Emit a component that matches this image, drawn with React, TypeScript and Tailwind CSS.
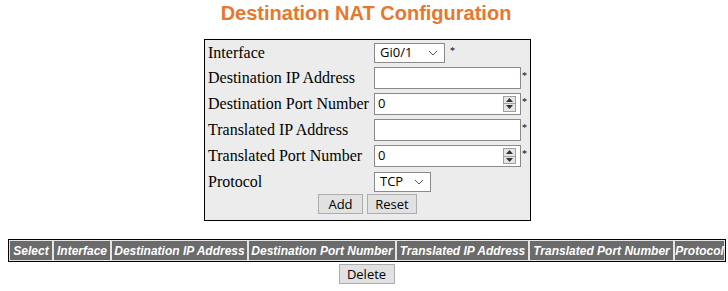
const COLUMNS = [
  { label: "Select", w: "w-[42px]" },
  { label: "Interface", w: "w-[56px]" },
  { label: "Destination IP Address", w: "w-[135px]" },
  { label: "Destination Port Number", w: "w-[146px]" },
  { label: "Translated IP Address", w: "w-[131px]" },
  { label: "Translated Port Number", w: "w-[143px]" },
  { label: "Protocol", w: "flex-1" },
];

const ui = "font-['Open_Sans','Noto_Sans',sans-serif]";

function Spinner() {
  return (
    <div className="flex flex-col w-[13px] h-[16px] border border-[#a0a0a0] bg-[#e6e6e6]">
      <div className="flex-1 flex items-center justify-center border-b border-[#a0a0a0]">
        <svg width="7" height="4" viewBox="0 0 7 4">
          <path d="M0 4 L3.5 0 L7 4 Z" fill="#333" />
        </svg>
      </div>
      <div className="flex-1 flex items-center justify-center">
        <svg width="7" height="4" viewBox="0 0 7 4">
          <path d="M0 0 L3.5 4 L7 0 Z" fill="#333" />
        </svg>
      </div>
    </div>
  );
}

function TextBox({ value, spin }: { value?: string; spin?: boolean }) {
  return (
    <div className="flex items-start">
      <div className="w-[147px] h-[22px] bg-white border border-[#8a8a8a] flex items-center pl-[3px] pr-[4px]">
        <span className={`flex-1 text-[13px] text-black ${ui}`}>{value}</span>
        {spin && <Spinner />}
      </div>
      <span className="text-[10px] leading-none ml-[1px] mt-[4px]">*</span>
    </div>
  );
}

function Select({ value, w, star }: { value: string; w: string; star?: boolean }) {
  return (
    <div className="flex items-start">
      <div className={`${w} h-[20px] bg-white border border-[#8a8a8a] flex items-center pl-[5px] pr-[6px]`}>
        <span className={`flex-1 text-[13px] text-black ${ui}`}>{value}</span>
        <svg width="10" height="6" viewBox="0 0 10 6">
          <path d="M1 1 L5 5 L9 1" stroke="#555" strokeWidth="1" fill="none" />
        </svg>
      </div>
      {star && <span className="text-[10px] leading-none ml-[5px] mt-[3px]">*</span>}
    </div>
  );
}

function Row({ label, children, h }: { label: string; children: React.ReactNode; h: string }) {
  return (
    <div className={`flex items-center ${h}`}>
      <div className="w-[166px] text-[16px] text-black whitespace-nowrap">{label}</div>
      {children}
    </div>
  );
}

export default function App() {
  return (
    <div className="w-[728px] h-[291px] bg-white font-['Liberation_Serif',serif] overflow-hidden">
      <h1 className="text-center text-[20px] font-bold text-[#e8772e] font-['Liberation_Sans',Arial,sans-serif] leading-[24px] pt-[1px] pl-[4px]">
        Destination NAT Configuration
      </h1>

      {/* form */}
      <div className="mt-[14px] ml-[204px] w-[327px] border border-black bg-[#ececec] pl-[3px] pt-[1px] pb-[6px]">
        <Row label="Interface" h="h-[24px]">
          <Select value="Gi0/1" w="w-[71px]" star />
        </Row>
        <Row label="Destination IP Address" h="h-[25px]">
          <TextBox />
        </Row>
        <Row label="Destination Port Number" h="h-[27px]">
          <TextBox value="0" spin />
        </Row>
        <Row label="Translated IP Address" h="h-[26px]">
          <TextBox />
        </Row>
        <Row label="Translated Port Number" h="h-[26px]">
          <TextBox value="0" spin />
        </Row>
        <Row label="Protocol" h="h-[25px]">
          <Select value="TCP" w="w-[57px]" />
        </Row>
        <div className={`flex justify-center gap-[4px] pr-[3px] ${ui}`}>
          <button className="w-[45px] h-[20px] bg-[#e1e1e1] border border-[#adadad] text-[13px] leading-none text-black">
            Add
          </button>
          <button className="w-[50px] h-[20px] bg-[#e1e1e1] border border-[#adadad] text-[13px] leading-none text-black">
            Reset
          </button>
        </div>
      </div>

      {/* entries table */}
      <div className="mt-[18px] ml-[8px] w-[718px] border border-black p-[1px] flex gap-[2px] bg-[#e4e4e4]">
        {COLUMNS.map((c) => (
          <div
            key={c.label}
            className={`${c.w} h-[19px] bg-[#6b6b6b] flex items-center justify-center text-white text-[12px] font-bold italic whitespace-nowrap font-['Liberation_Sans',Arial,sans-serif]`}
          >
            {c.label}
          </div>
        ))}
      </div>
      <div className={`flex justify-center pt-[2px] pl-[5px] ${ui}`}>
        <button className="w-[56px] h-[20px] bg-[#e1e1e1] border border-[#adadad] text-[13px] leading-none text-black">
          Delete
        </button>
      </div>
    </div>
  );
}
